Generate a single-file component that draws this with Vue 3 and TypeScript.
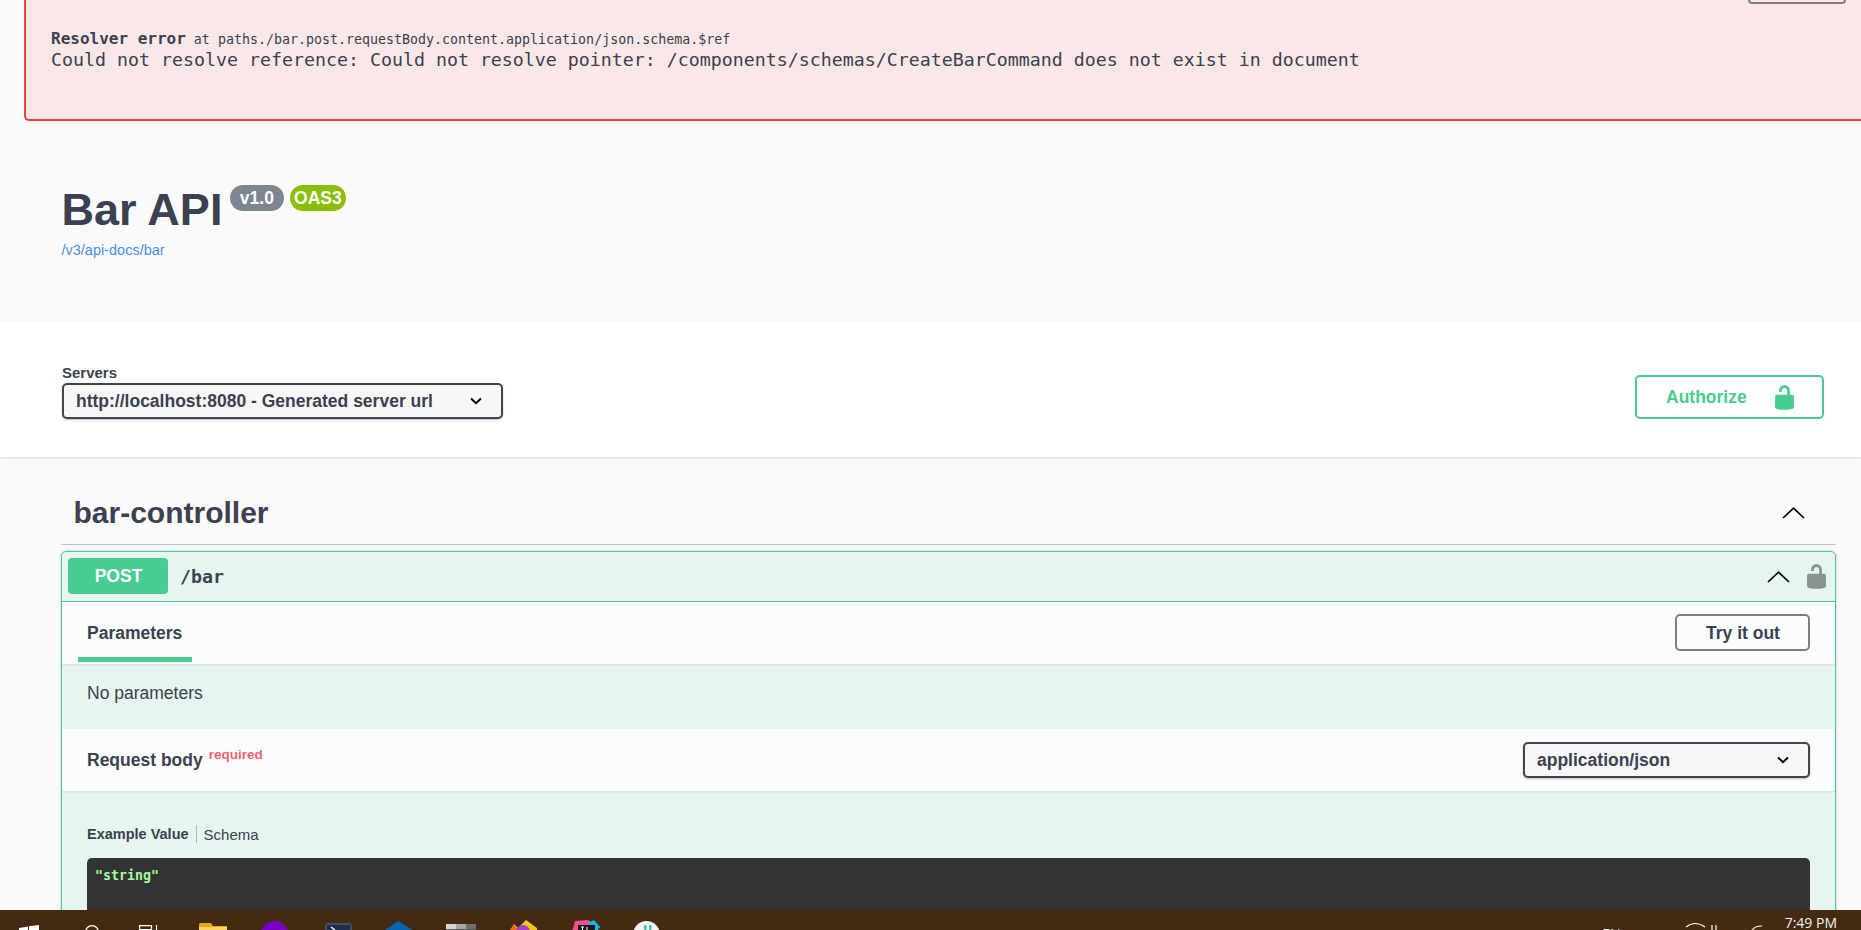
<script setup lang="ts">
const lockPath =
  'M15.8 8H14V5.6C14 2.703 12.665 1 10 1 7.334 1 6 2.703 6 5.6V6h2v-.801C8 3.754 8.797 3 10 3c1.203 0 2 .754 2 2.199V8H4c-.553 0-1 .646-1 1.199V17c0 .549.428 1.139.951 1.307l1.197.387C5.672 18.861 6.55 19 7.1 19h5.8c.549 0 1.428-.139 1.951-.307l1.196-.387c.524-.167.953-.757.953-1.306V9.199C17 8.646 16.352 8 15.8 8z'
</script>

<template>
  <div class="page">
    <div class="content">
      <section class="error">
        <div class="error-top"><span class="clear-btn"></span></div>
        <div class="error-line1"><b>Resolver error</b><span class="at">at paths./bar.post.requestBody.content.application/json.schema.$ref</span></div>
        <div class="error-line2">Could not resolve reference: Could not resolve pointer: /components/schemas/CreateBarCommand does not exist in document</div>
      </section>

      <section class="info">
        <div class="title-row">
          <h1>Bar API</h1>
          <span class="badge version">v1.0</span>
          <span class="badge oas">OAS3</span>
        </div>
        <a class="spec-link">/v3/api-docs/bar</a>
      </section>

      <section class="scheme">
        <div class="servers">
          <div class="servers-label">Servers</div>
          <div class="select server-select">
            <span>http://localhost:8080 - Generated server url</span>
            <svg class="sel-chev" width="12" height="8" viewBox="0 0 12 8"><polyline points="1,1.5 6,6.2 11,1.5" fill="none" stroke="#000" stroke-width="2" /></svg>
          </div>
        </div>
        <div class="authorize">
          <span>Authorize</span>
          <svg width="27" height="27" viewBox="0 0 20 20"><path :d="lockPath" fill="#49cc90" /></svg>
        </div>
      </section>

      <section class="ops">
        <div class="tag">
          <h3>bar-controller</h3>
          <svg width="23" height="12" viewBox="0 0 23 12"><polyline points="1,11 11.5,1.2 22,11" fill="none" stroke="#000" stroke-width="1.7" /></svg>
        </div>

        <div class="opblock">
          <div class="op-head">
            <span class="method">POST</span>
            <span class="path">/bar</span>
            <svg class="op-chev" width="23" height="12" viewBox="0 0 23 12"><polyline points="1,11 11.5,1.2 22,11" fill="none" stroke="#000" stroke-width="1.7" /></svg>
            <svg class="op-lock" width="27" height="27" viewBox="0 0 20 20"><path :d="lockPath" fill="#000" fill-opacity=".4" /></svg>
          </div>

          <div class="bar params-bar">
            <div class="tab">Parameters</div>
            <div class="try">Try it out</div>
          </div>
          <div class="no-params">No parameters</div>

          <div class="bar body-bar">
            <div class="req-title">Request body<span class="required">required</span></div>
            <div class="select json-select">
              <span>application/json</span>
              <svg class="sel-chev" width="12" height="8" viewBox="0 0 12 8"><polyline points="1,1.5 6,6.2 11,1.5" fill="none" stroke="#000" stroke-width="2" /></svg>
            </div>
          </div>

          <div class="example">
            <div class="tabs"><b>Example Value</b><span class="sep"></span><span class="schema">Schema</span></div>
            <pre class="code">"string"</pre>
          </div>
        </div>
      </section>
    </div>

    <footer class="taskbar">
      <svg class="tb-apps" width="680" height="20" viewBox="0 910 680 20">
        <path d="M19 928 l9 -1.5 V932 H19z M29 926.3 L39 925 V932 H29z" fill="#fff" />
        <circle cx="92" cy="932" r="6.4" fill="none" stroke="#fff" stroke-width="1.3" />
        <path d="M139.600 932 V925.700 H151.500 V932 M139 929.500 H152 M156.500 925 V932" fill="none" stroke="#fff" stroke-width="1.200" />
        <path d="M199 932 V924.500 Q199 923 200.500 923 H211 L213 926 H227 V932z" fill="#e8a90f" />
        <rect x="199" y="927" width="28" height="6" fill="#fbd467" />
        <circle cx="274.500" cy="935" r="14" fill="#7a00c8" />
        <rect x="326" y="924" width="25" height="8" rx="1.500" fill="#1d2f4c" stroke="#5c6f8c" stroke-width="1" />
        <path d="M331 927 l4 3" stroke="#fff" stroke-width="1.300" fill="none" />
        <path d="M398.500 921 L414 931 H383z" fill="#0a63b0" />
        <rect x="446" y="924" width="30" height="8" fill="#555" />
        <rect x="446" y="924" width="10" height="5" fill="#d4d4d4" />
        <rect x="456" y="924" width="10" height="5" fill="#a8a8a8" />
        <rect x="466" y="924" width="10" height="5" fill="#6e6e6e" />
        <path d="M509 932 L514 924 L518 928 L526 920 L537 928 V932z" fill="#f5c518" />
        <path d="M509 932 L514 924 L519 932z" fill="#f26a1b" />
        <circle cx="523" cy="932" r="7" fill="#a83fc8" />
        <path d="M572 932 L575 921 L588 920 L600 927 L596 932z" fill="#f14e8f" />
        <path d="M588 923 L594 920 L600 927 L596 932z" fill="#16b5e8" />
        <rect x="578" y="925" width="17" height="8" fill="#1a1a1a" />
        <path d="M581 927 h3 M582.500 927 v4 M587 927 v4" stroke="#fff" stroke-width="1" />
        <circle cx="646.500" cy="934.500" r="13.500" fill="#f4f4f4" />
        <rect x="644" y="925" width="2.600" height="5" rx="1.300" fill="#36c5ab" />
        <rect x="649" y="925" width="2.600" height="5" rx="1.300" fill="#36c5ab" />
      </svg>
      <div class="tray">
        <span class="en">EN</span>
        <svg width="80" height="20" viewBox="0 0 80 20">
          <path d="M1 19 Q10 12 20 19" fill="none" stroke="#fff" stroke-width="1.200" transform="translate(0,-2)" />
          <path d="M27 15 V20 M31 15 V20" stroke="#fff" stroke-width="1.200" />
          <path d="M67 20 Q70 16 77 16" fill="none" stroke="#fff" stroke-width="1.200" />
        </svg>
        <span class="clock">7:49 PM</span>
      </div>
    </footer>
  </div>
</template>

<style>
html, body { margin: 0; overflow: hidden; background: #fafafa; }
</style>

<style scoped>
.page {
  width: 1861px;
  height: 930px;
  display: flex;
  flex-direction: column;
  overflow: hidden;
  background: #fafafa;
  color: #3b4151;
  font-family: "Liberation Sans", Arial, sans-serif;
}
.content { flex: 1; min-height: 0; overflow: hidden; }

.error {
  box-sizing: border-box;
  height: 121px;
  margin-left: 24px;
  padding-left: 25px;
  background: #fae8e8;
  border-left: 2px solid #f93e3e;
  border-bottom: 2px solid #f93e3e;
  border-bottom-left-radius: 5px;
  font-family: "DejaVu Sans Mono", monospace;
}
.error-top { height: 4px; display: flex; justify-content: flex-end; padding-right: 15px; }
.clear-btn {
  box-sizing: border-box;
  width: 98px;
  height: 4px;
  border: 2.5px solid #7f7f7f;
  border-top: 0;
  border-radius: 0 0 5px 5px;
}
.error-line1 { margin-top: 24px; height: 21px; line-height: 21px; font-size: 16px; }
.error-line1 .at { margin-left: 8px; font-size: 13.3px; }
.error-line2 { height: 21px; line-height: 21px; font-size: 18.27px; white-space: nowrap; }

.info { box-sizing: border-box; height: 201px; padding: 61px 0 0 61.5px; }
.title-row { display: flex; align-items: flex-start; height: 59px; }
h1 { margin: 0; font-size: 45px; line-height: 56px; font-weight: 700; }
.badge {
  box-sizing: border-box;
  height: 26px;
  margin-top: 3px;
  border-radius: 13px;
  color: #fff;
  font-size: 17.5px;
  font-weight: 700;
  line-height: 26px;
  text-align: center;
}
.version { width: 54px; margin-left: 7.5px; background: #7d8492; }
.oas { width: 56px; margin-left: 6px; background: #89bf04; }
.spec-link { display: block; font-size: 14.5px; line-height: 18px; color: #4990e2; }

.scheme {
  box-sizing: border-box;
  height: 135px;
  padding: 0 37px 38px 62px;
  display: flex;
  justify-content: space-between;
  align-items: flex-end;
  background: #fff;
  box-shadow: 0 1px 2px rgba(0, 0, 0, .15);
  position: relative;
}
.servers-label { font-size: 15px; font-weight: 700; line-height: 18px; margin-bottom: 1px; }
.select {
  box-sizing: border-box;
  height: 36px;
  display: flex;
  align-items: center;
  justify-content: space-between;
  background: #f7f7f7;
  border: 2.5px solid #41444e;
  border-radius: 5px;
  box-shadow: 0 1px 2px rgba(0, 0, 0, .25);
  font-size: 17.5px;
  font-weight: 700;
}
.server-select { width: 441px; padding: 0 19px 0 12px; }
.json-select { width: 287px; padding: 0 19px 0 12px; }
.authorize {
  box-sizing: border-box;
  width: 189px;
  height: 44px;
  display: flex;
  align-items: center;
  padding-left: 29px;
  border: 2.5px solid #49cc90;
  border-radius: 5px;
  color: #49cc90;
  font-size: 17.5px;
  font-weight: 700;
}
.authorize svg { margin-left: 24px; }

.ops { padding: 0 25px 0 61px; }
.tag {
  box-sizing: border-box;
  height: 88px;
  padding: 25px 31px 0 12.500px;
  display: flex;
  align-items: center;
  justify-content: space-between;
  border-bottom: 1px solid rgba(59, 65, 81, .3);
}
h3 { margin: 0; font-size: 30px; font-weight: 700; }

.opblock {
  margin-top: 6px;
  height: 500px;
  border: 1px solid #49cc90;
  border-radius: 5px;
  background: rgba(73, 204, 144, .1);
  box-shadow: 0 0 3px rgba(0, 0, 0, .19);
}
.op-head {
  box-sizing: border-box;
  height: 50px;
  padding-left: 6px;
  display: flex;
  align-items: center;
  border-bottom: 1px solid #49cc90;
}
.method {
  width: 100px;
  height: 36px;
  margin-top: -1px;
  border-radius: 4px;
  background: #49cc90;
  color: #fff;
  font-size: 17.5px;
  font-weight: 700;
  line-height: 36px;
  text-align: center;
  text-indent: 1px;
}
.path {
  margin-left: 12px;
  font-family: "DejaVu Sans Mono", monospace;
  font-size: 18.27px;
  font-weight: 700;
}
.op-chev { margin-left: auto; transform: translateX(1px); }
.op-lock { margin: 0 5px 0 14px; }

.bar {
  background: rgba(255, 255, 255, .8);
  box-shadow: 0 1px 2px rgba(0, 0, 0, .1);
  display: flex;
  justify-content: space-between;
  padding-right: 25px;
}
.params-bar { height: 62px; }
.tab {
  box-sizing: border-box;
  width: 114px;
  height: 60px;
  margin-left: 16px;
  padding: 20px 0 0 9px;
  border-bottom: 5px solid #49cc90;
  font-size: 17.5px;
  font-weight: 700;
  line-height: 22px;
}
.try {
  box-sizing: border-box;
  width: 135px;
  height: 37px;
  margin-top: 12px;
  border: 2.5px solid #7f7f7f;
  border-radius: 5px;
  font-size: 17.5px;
  font-weight: 700;
  line-height: 34px;
  text-align: center;
  text-indent: 1px;
}
.no-params {
  box-sizing: border-box;
  height: 65px;
  padding: 18px 0 0 25px;
  font-size: 17.5px;
  line-height: 22px;
}
.body-bar { height: 62px; align-items: center; padding-left: 25px; }
.req-title { font-size: 17.5px; font-weight: 700; }
.required {
  position: relative;
  top: -7px;
  margin-left: 6px;
  font-size: 13.5px;
  color: #f9626f;
}
.example { padding: 32px 25px 0 25px; }
.tabs { display: flex; align-items: center; height: 22px; font-size: 14.5px; }
.sep { width: 1px; height: 18px; margin: 0 7px; background: rgba(0, 0, 0, .25); }
.schema { font-size: 15px; }
.code {
  margin: 13px 0 0;
  height: 200px;
  padding: 9px 8px;
  box-sizing: border-box;
  background: #333;
  border-radius: 5px;
  color: #a2fca2;
  font-family: "DejaVu Sans Mono", monospace;
  font-size: 13.3px;
  font-weight: 700;
  line-height: 18px;
}

.taskbar {
  flex: none;
  height: 20px;
  display: flex;
  justify-content: space-between;
  background: #432a10;
  overflow: hidden;
}
.tb-apps { display: block; }
.tray { display: flex; align-items: flex-start; color: #f2f2f2; font-family: "Open Sans", sans-serif; padding-right: 24px; }
.en { margin-top: 15px; font-size: 14px; line-height: 18px; margin-right: 64px; }
.clock { margin: 4px 0 0 20px; font-size: 14px; line-height: 18px; white-space: nowrap; }
</style>
